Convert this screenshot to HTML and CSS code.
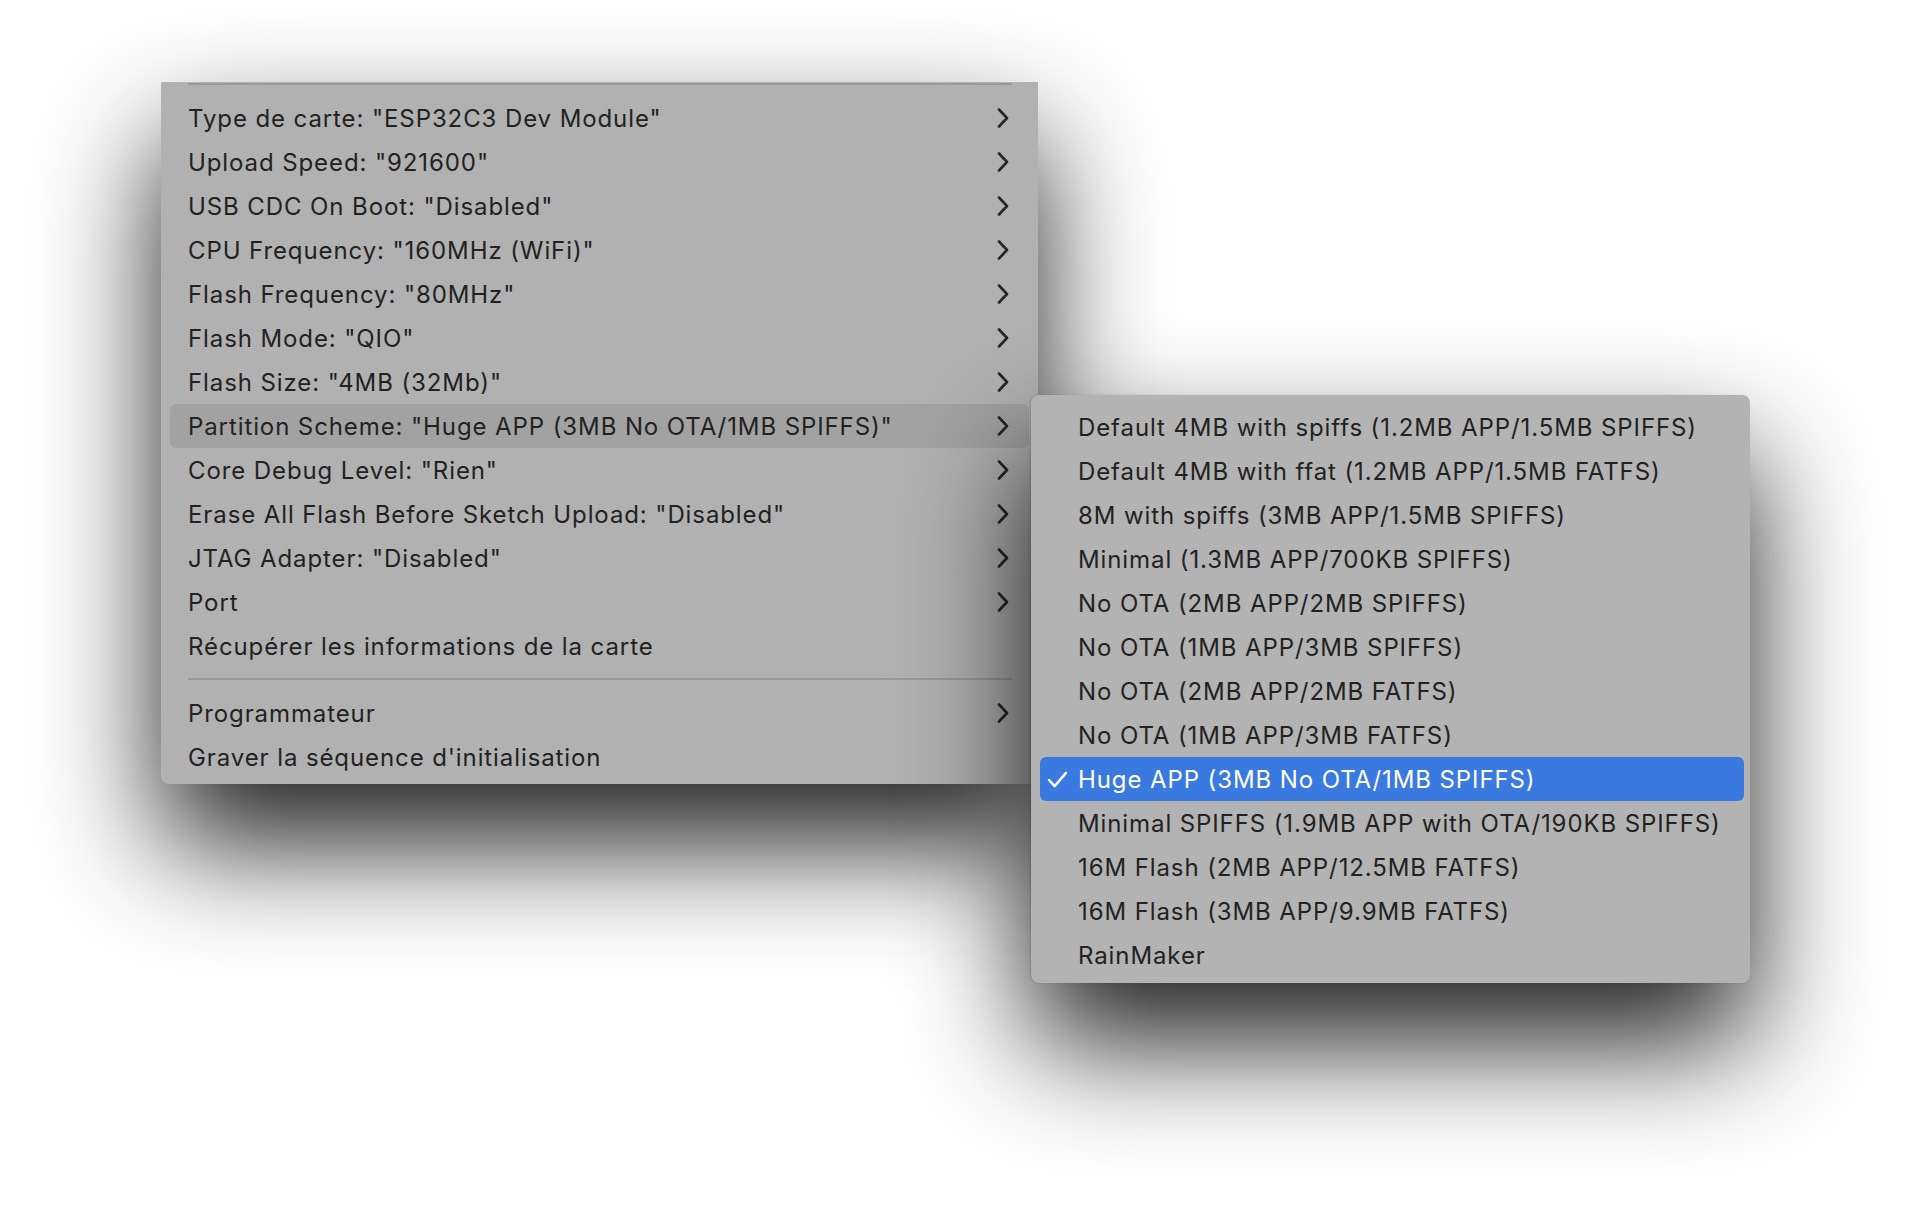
FILE: index.html
```html
<!DOCTYPE html>
<html lang="fr">
<head>
<meta charset="utf-8">
<title>Menu</title>
<link rel="stylesheet" href="styles.css">
</head>
<body>
<div class="stage">
  <div class="menu main">
    <div class="sep top"></div>
    <div class="item"><span>Type de carte: "ESP32C3 Dev Module"</span><svg class="chev" viewBox="0 0 12 20"><path d="M2 1.5 L10 10 L2 18.5"/></svg></div>
    <div class="item"><span>Upload Speed: "921600"</span><svg class="chev" viewBox="0 0 12 20"><path d="M2 1.5 L10 10 L2 18.5"/></svg></div>
    <div class="item"><span>USB CDC On Boot: "Disabled"</span><svg class="chev" viewBox="0 0 12 20"><path d="M2 1.5 L10 10 L2 18.5"/></svg></div>
    <div class="item"><span>CPU Frequency: "160MHz (WiFi)"</span><svg class="chev" viewBox="0 0 12 20"><path d="M2 1.5 L10 10 L2 18.5"/></svg></div>
    <div class="item"><span>Flash Frequency: "80MHz"</span><svg class="chev" viewBox="0 0 12 20"><path d="M2 1.5 L10 10 L2 18.5"/></svg></div>
    <div class="item"><span>Flash Mode: "QIO"</span><svg class="chev" viewBox="0 0 12 20"><path d="M2 1.5 L10 10 L2 18.5"/></svg></div>
    <div class="item"><span>Flash Size: "4MB (32Mb)"</span><svg class="chev" viewBox="0 0 12 20"><path d="M2 1.5 L10 10 L2 18.5"/></svg></div>
    <div class="item open"><span>Partition Scheme: "Huge APP (3MB No OTA/1MB SPIFFS)"</span><svg class="chev" viewBox="0 0 12 20"><path d="M2 1.5 L10 10 L2 18.5"/></svg></div>
    <div class="item"><span>Core Debug Level: "Rien"</span><svg class="chev" viewBox="0 0 12 20"><path d="M2 1.5 L10 10 L2 18.5"/></svg></div>
    <div class="item"><span>Erase All Flash Before Sketch Upload: "Disabled"</span><svg class="chev" viewBox="0 0 12 20"><path d="M2 1.5 L10 10 L2 18.5"/></svg></div>
    <div class="item"><span>JTAG Adapter: "Disabled"</span><svg class="chev" viewBox="0 0 12 20"><path d="M2 1.5 L10 10 L2 18.5"/></svg></div>
    <div class="item"><span>Port</span><svg class="chev" viewBox="0 0 12 20"><path d="M2 1.5 L10 10 L2 18.5"/></svg></div>
    <div class="item"><span>Récupérer les informations de la carte</span></div>
    <div class="sep mid"></div>
    <div class="item"><span>Programmateur</span><svg class="chev" viewBox="0 0 12 20"><path d="M2 1.5 L10 10 L2 18.5"/></svg></div>
    <div class="item"><span>Graver la séquence d'initialisation</span></div>
  </div>

  <div class="menu sub">
    <div class="item"><span class="tick"></span><span>Default 4MB with spiffs (1.2MB APP/1.5MB SPIFFS)</span></div>
    <div class="item"><span class="tick"></span><span>Default 4MB with ffat (1.2MB APP/1.5MB FATFS)</span></div>
    <div class="item"><span class="tick"></span><span>8M with spiffs (3MB APP/1.5MB SPIFFS)</span></div>
    <div class="item"><span class="tick"></span><span>Minimal (1.3MB APP/700KB SPIFFS)</span></div>
    <div class="item"><span class="tick"></span><span>No OTA (2MB APP/2MB SPIFFS)</span></div>
    <div class="item"><span class="tick"></span><span>No OTA (1MB APP/3MB SPIFFS)</span></div>
    <div class="item"><span class="tick"></span><span>No OTA (2MB APP/2MB FATFS)</span></div>
    <div class="item"><span class="tick"></span><span>No OTA (1MB APP/3MB FATFS)</span></div>
    <div class="item selected"><span class="tick"><svg viewBox="0 0 24 18"><path d="M3 9.5 L9 16 L21 2"/></svg></span><span>Huge APP (3MB No OTA/1MB SPIFFS)</span></div>
    <div class="item"><span class="tick"></span><span>Minimal SPIFFS (1.9MB APP with OTA/190KB SPIFFS)</span></div>
    <div class="item"><span class="tick"></span><span>16M Flash (2MB APP/12.5MB FATFS)</span></div>
    <div class="item"><span class="tick"></span><span>16M Flash (3MB APP/9.9MB FATFS)</span></div>
    <div class="item"><span class="tick"></span><span>RainMaker</span></div>
  </div>
</div>
</body>
</html>
```

FILE: styles.css
```css
* { box-sizing: border-box; }

html, body {
  margin: 0;
  padding: 0;
  background: #ffffff;
  width: 1912px;
  height: 1224px;
  overflow: hidden;
}

.stage {
  position: relative;
  width: 1912px;
  height: 1224px;
  padding: 82px 0 0 161px;
  font-family: Inter, "Liberation Sans", sans-serif;
  font-size: 24px;
  letter-spacing: 0.9px;
  color: #222222;
}

.menu {
  display: flex;
  flex-direction: column;
}

.main {
  width: 877px;
  padding: 0 0 5px 0;
  background: #b1b1b1;
  border-radius: 0 0 8px 8px;
  box-shadow: 0 60px 120px rgba(0, 0, 0, 0.88);
}

.sep {
  height: 2px;
  background: #999999;
  margin: 0 26px 0 27px;
}

.sep.top {
  margin-top: 1px;
  margin-bottom: 11px;
}

.sep.mid {
  margin-top: 10px;
  margin-bottom: 11px;
}

.item {
  height: 44px;
  display: flex;
  align-items: center;
  justify-content: space-between;
  margin: 0 9px;
  padding: 0 20px 0 18px;
  border-radius: 6px;
  white-space: nowrap;
}

.item.open {
  background: #a2a2a2;
}

.chev {
  width: 12px;
  height: 20px;
  flex: none;
}

.chev path {
  fill: none;
  stroke: #262626;
  stroke-width: 2.6;
  stroke-linecap: round;
  stroke-linejoin: round;
}

.sub {
  position: absolute;
  left: 1031px;
  top: 395px;
  width: 719px;
  padding: 10px 0 6px 0;
  background: #b3b3b3;
  border-radius: 8px;
  box-shadow: 0 60px 120px rgba(0, 0, 0, 0.88), -1px 0 2px rgba(0, 0, 0, 0.15);
  z-index: 2;
}

.sub .item {
  justify-content: flex-start;
  margin: 0 6px 0 9px;
  padding: 0 0 0 6px;
}

.tick {
  width: 32px;
  flex: none;
  display: flex;
  align-items: center;
}

.tick svg {
  width: 23px;
  height: 17px;
}

.tick path {
  fill: none;
  stroke: #ffffff;
  stroke-width: 2.6;
  stroke-linecap: round;
  stroke-linejoin: round;
}

.sub .item.selected {
  background: #3a79df;
  color: #ffffff;
}
```
